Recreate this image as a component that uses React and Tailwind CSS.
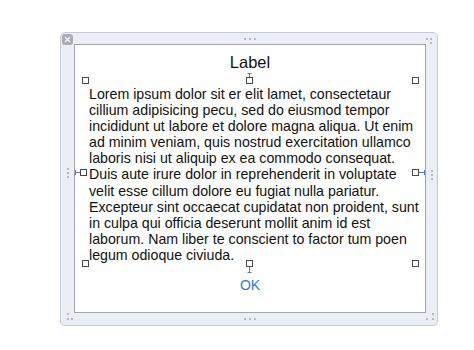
import React from "react";

const Sq = ({ className }) => (
  <div className={"absolute w-[7px] h-[7px] border border-[#4a4a4a] bg-white " + className} />
);
const D = () => <div className="w-[2px] h-[2px] rounded-full bg-[#a4a6b2]" />;

export default function App() {
  const lines = [
    "Lorem ipsum dolor sit er elit lamet, consectetaur",
    "cillium adipisicing pecu, sed do eiusmod tempor",
    "incididunt ut labore et dolore magna aliqua. Ut enim",
    "ad minim veniam, quis nostrud exercitation ullamco",
    "laboris nisi ut aliquip ex ea commodo consequat.",
    "Duis aute irure dolor in reprehenderit in voluptate",
    "velit esse cillum dolore eu fugiat nulla pariatur.",
    "Excepteur sint occaecat cupidatat non proident, sunt",
    "in culpa qui officia deserunt mollit anim id est",
    "laborum. Nam liber te conscient to factor tum poen",
    "legum odioque civiuda.",
  ];
  return (
    <div className="w-[474px] h-[350px] bg-white overflow-hidden pt-[32px] pl-[60px]" style={{ fontFamily: '"Liberation Sans", Arial, sans-serif' }}>
      <div className="relative w-[378px] h-[294px] rounded-[5px] border border-[#c6c8d6] bg-[#eceef5] pt-[11px] pl-[13px]">
        {/* close button */}
        <div className="absolute left-[1px] top-[1px] w-[11px] h-[11px] rounded-[3px] bg-[#a9abb8] flex items-center justify-center">
          <svg width="7" height="7" viewBox="0 0 7 7">
            <path d="M1 1L6 6M6 1L1 6" stroke="#eef0f5" strokeWidth="1.5" />
          </svg>
        </div>
        {/* frame grip dots */}
        <div className="absolute left-[183px] top-[5px] flex gap-[3px]"><D /><D /><D /></div>
        <div className="absolute left-[183px] top-[285px] flex gap-[3px]"><D /><D /><D /></div>
        <div className="absolute left-[6px] top-[135px] flex flex-col gap-[2px]"><D /><D /><D /></div>
        <div className="absolute left-[370px] top-[137px] flex flex-col gap-[2px]"><D /><D /><D /></div>
        <div className="absolute left-[365px] top-[5px] grid grid-cols-2 gap-x-[2px] gap-y-[2px]"><D /><D /><div /><D /></div>
        <div className="absolute left-[6px] top-[280px] grid grid-cols-2 gap-x-[2px] gap-y-[3px]"><D /><div /><D /><D /></div>
        <div className="absolute left-[365px] top-[280px] grid grid-cols-2 gap-x-[4px] gap-y-[3px]"><div /><D /><D /><D /></div>

        <div className="relative w-[352px] h-[269px] border border-[#a3a4ad] bg-white flex flex-col items-center">
          <div className="mt-[8px] text-[16.5px] leading-[19px] text-[#111]">Label</div>
          <div className="mt-[14px] self-start pl-[14px] text-[14.2px] leading-[16.1px] text-[#111] whitespace-nowrap">
            {lines.map((l, i) => (
              <div key={i}>{l}</div>
            ))}
          </div>
          <div className="mt-[14px] text-[14px] leading-[16px] text-[#2e7bd6]">OK</div>

          {/* selection handles */}
          <Sq className="left-[7px] top-[32px]" />
          <Sq className="left-[337px] top-[32px]" />
          <Sq className="left-[7px] top-[215px]" />
          <Sq className="left-[337px] top-[215px]" />
          <Sq className="left-[171px] top-[32px]" />
          <Sq className="left-[171px] top-[215px]" />
          <Sq className="left-[5px] top-[124px]" />
          <Sq className="left-[337px] top-[124px]" />
          {/* constraint markers */}
          <svg className="absolute left-[0px] top-[0px]" width="350" height="267" viewBox="0 0 350 267" fill="none">
            <path d="M172.5 28.5H176.5M174.5 28.5V32" stroke="#4a7ac8" />
            <path d="M174.5 222V227.5M172.5 227.5H176.5" stroke="#4a7ac8" />
            <path d="M0.5 125V130M0.5 127.5H5" stroke="#4a7ac8" />
            <path d="M344 127.5H349.5M349.5 125V130" stroke="#4a7ac8" />
          </svg>
        </div>
      </div>
    </div>
  );
}
